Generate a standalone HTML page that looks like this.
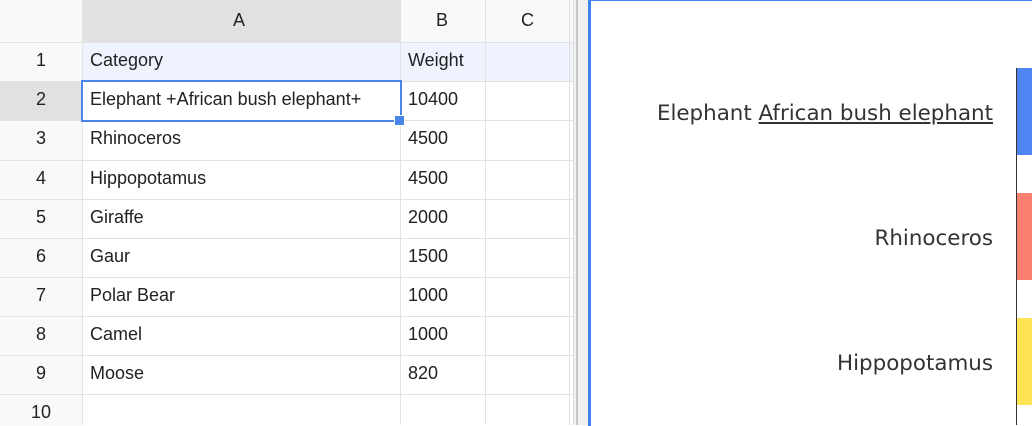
<!DOCTYPE html><html><head><style>
body{margin:0;width:1032px;height:425px;overflow:hidden;background:#fff;font-family:"Liberation Sans",Arial,sans-serif;position:relative}
.a{position:absolute}
.hl{position:absolute;left:0;width:573px;height:1px;background:#e2e2e2}
.vl{position:absolute;top:0;height:425px;width:1px;background:#e2e2e2}
.t{position:absolute;font-size:18px;color:#222}
.rn{position:absolute;left:0;width:82px;text-align:center;font-size:18px;color:#222}
.lab{position:absolute;right:39px;font-family:"DejaVu Sans",sans-serif;font-size:21.4px;color:#333;text-align:right}
</style></head><body>
<div class="a" style="left:0;top:0;width:573px;height:42px;background:#f8f9fa"></div>
<div class="a" style="left:82px;top:0;width:318px;height:42px;background:#e1e1e1"></div>
<div class="a" style="left:0;top:0;width:82px;height:425px;background:#f8f9fa"></div>
<div class="a" style="left:0;top:81px;width:82px;height:39px;background:#e1e1e1"></div>
<div class="a" style="left:82px;top:42px;width:491px;height:39px;background:#eef3fd"></div>
<div class="hl" style="top:42px"></div><div class="hl" style="top:81px"></div><div class="hl" style="top:120px"></div><div class="hl" style="top:160px"></div><div class="hl" style="top:199px"></div><div class="hl" style="top:238px"></div><div class="hl" style="top:277px"></div><div class="hl" style="top:316px"></div><div class="hl" style="top:355px"></div><div class="hl" style="top:394px"></div>
<div class="vl" style="left:82px"></div><div class="vl" style="left:400px"></div><div class="vl" style="left:485px"></div><div class="vl" style="left:569px"></div>
<div class="a" style="left:573px;top:0;width:15px;height:425px;background:#f1f1f1;border-left:1px solid #ddd"></div>
<div class="a" style="left:576px;top:0;width:2px;height:425px;background:#c8c8c8"></div>
<div class="t" style="left:233px;top:10px">A</div><div class="t" style="left:436px;top:10px">B</div><div class="t" style="left:521px;top:10px">C</div>
<div class="rn" style="top:50px">1</div><div class="rn" style="top:89px">2</div><div class="rn" style="top:128px">3</div><div class="rn" style="top:168px">4</div><div class="rn" style="top:207px">5</div><div class="rn" style="top:246px">6</div><div class="rn" style="top:285px">7</div><div class="rn" style="top:324px">8</div><div class="rn" style="top:363px">9</div><div class="rn" style="top:402px">10</div>
<div class="t" style="left:90px;top:50px">Category</div><div class="t" style="left:408px;top:50px">Weight</div>
<div class="t" style="left:90px;top:89px">Elephant +African bush elephant+</div><div class="t" style="left:408px;top:89px">10400</div>
<div class="t" style="left:90px;top:128px">Rhinoceros</div><div class="t" style="left:408px;top:128px">4500</div>
<div class="t" style="left:90px;top:168px">Hippopotamus</div><div class="t" style="left:408px;top:168px">4500</div>
<div class="t" style="left:90px;top:207px">Giraffe</div><div class="t" style="left:408px;top:207px">2000</div>
<div class="t" style="left:90px;top:246px">Gaur</div><div class="t" style="left:408px;top:246px">1500</div>
<div class="t" style="left:90px;top:285px">Polar Bear</div><div class="t" style="left:408px;top:285px">1000</div>
<div class="t" style="left:90px;top:324px">Camel</div><div class="t" style="left:408px;top:324px">1000</div>
<div class="t" style="left:90px;top:363px">Moose</div><div class="t" style="left:408px;top:363px">820</div>
<div class="a" style="left:81px;top:80px;width:317px;height:38px;border:2px solid #4a86e8"></div>
<div class="a" style="left:394px;top:115px;width:9px;height:9px;background:#4a86e8;border:1px solid #fff"></div>
<div class="a" style="left:588px;top:0;width:444px;height:425px;background:#fff;border-left:3px solid #3d84ec;border-top:1px solid #3d84ec"></div>
<div class="a" style="left:1016px;top:68px;width:1px;height:357px;background:#333"></div>
<div class="a" style="left:1017px;top:68px;width:15px;height:87px;background:#4f86f4"></div>
<div class="a" style="left:1017px;top:193px;width:15px;height:87px;background:#fb806f"></div>
<div class="a" style="left:1017px;top:318px;width:15px;height:87px;background:#fee354"></div>
<div class="lab" style="top:101px">Elephant <u>African bush elephant</u></div>
<div class="lab" style="top:226px">Rhinoceros</div>
<div class="lab" style="top:351px">Hippopotamus</div>
</body></html>
